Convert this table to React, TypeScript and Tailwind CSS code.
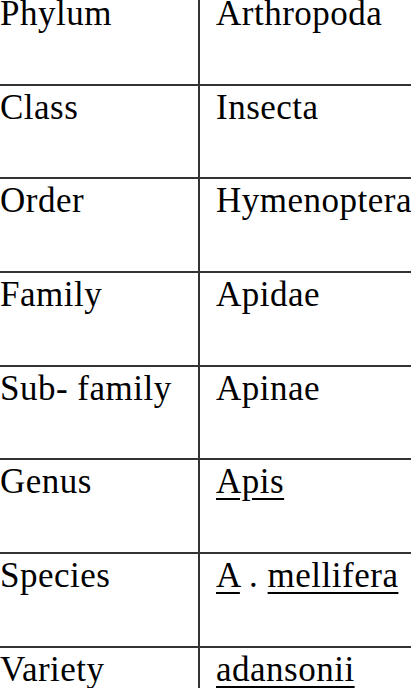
import React from 'react';

type Row = { label: string; value: React.ReactNode };

const ul = 'underline decoration-[1.5px] underline-offset-[5px]';

const rows: Row[] = [
  { label: 'Phylum', value: 'Arthropoda' },
  { label: 'Class', value: 'Insecta' },
  { label: 'Order', value: 'Hymenoptera' },
  { label: 'Family', value: 'Apidae' },
  { label: 'Sub- family', value: 'Apinae' },
  { label: 'Genus', value: <span className={ul}>Apis</span> },
  {
    label: 'Species',
    value: (
      <>
        <span className={ul}>A</span> . <span className={ul}>mellifera</span>
      </>
    ),
  },
  {
    label: 'Variety',
    value: <span className="underline decoration-[3px] underline-offset-[5px]">adansonii</span>,
  },
];

const App: React.FC = () => {
  return (
    <div
      className="w-[411px] h-[688px] overflow-hidden bg-white text-black"
      style={{ fontFamily: '"Liberation Serif", "Times New Roman", serif' }}
    >
      <div className="-mt-[8px]">
        {rows.map((r) => (
          <div key={r.label} className="flex h-[93.7px] border-b-2 border-[#333]">
            <div className="w-[200px] shrink-0 border-r-2 border-[#333] pt-[4px] text-[35px] leading-none tracking-[0.5px] whitespace-nowrap">
              {r.label}
            </div>
            <div className="pl-[16px] pt-[4px] text-[35px] leading-none tracking-[0.5px] whitespace-nowrap">
              {r.value}
            </div>
          </div>
        ))}
      </div>
    </div>
  );
};

export default App;
